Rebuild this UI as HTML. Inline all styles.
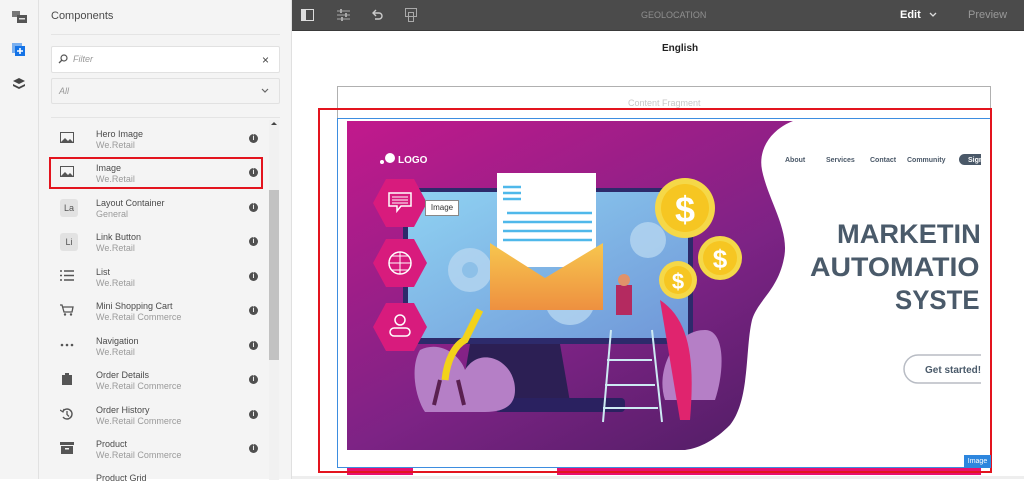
<!DOCTYPE html>
<html><head><meta charset="utf-8"><style>
*{margin:0;padding:0;box-sizing:border-box}
body{width:1024px;height:479px;overflow:hidden;background:#fff;font-family:"Liberation Sans",sans-serif;position:relative}
.abs{position:absolute}
.rail{left:0;top:0;width:39px;height:479px;background:#f4f4f4;border-right:1px solid #e1e1e1}
.panel{left:39px;top:0;width:253px;height:479px;background:#f4f4f4;border-right:1px solid #e0e0e0}
.item{position:absolute;left:50px;width:214px;height:34px}
.item .t{position:absolute;left:46px;top:3px;font-size:9px;color:#4b4b4b}
.item .s{position:absolute;left:46px;top:14px;font-size:9px;color:#9a9a9a}
.item .i{position:absolute;left:199px;top:8px;width:9px;height:9px;border-radius:50%;background:#505050;color:#f4f4f4;font-size:7px;font-weight:bold;text-align:center;line-height:9px}
.item .ic{position:absolute;left:10px;top:4px;width:18px;height:18px;border-radius:3px;background:#e2e2e2;font-size:9px;color:#555;text-align:center;line-height:18px}
.item svg{position:absolute;left:10px;top:6px}
</style></head><body>
<div class="abs rail"></div>
<svg class="abs" style="left:12px;top:10px" width="16" height="14"><rect x="0" y="1" width="8" height="6" fill="#777"/><rect x="5" y="5" width="10" height="8" fill="#555"/><rect x="7" y="8" width="6" height="1.5" fill="#ddd"/></svg>
<svg class="abs" style="left:12px;top:43px" width="14" height="14"><rect x="0" y="0" width="10" height="10" fill="#2680eb" opacity=".6"/><rect x="3" y="3" width="10" height="10" fill="#1473e6"/><path d="M8 5v6M5 8h6" stroke="#fff" stroke-width="1.6"/></svg>
<svg class="abs" style="left:12px;top:77px" width="14" height="14"><path d="M7 1l6 3-6 3-6-3z" fill="#444"/><path d="M1 7l6 3 6-3v2l-6 3-6-3z" fill="#444"/></svg>
<div class="abs panel"></div>
<div class="abs" style="left:51px;top:10px;font-size:11px;color:#4b4b4b">Components</div>
<div class="abs" style="left:51px;top:34px;width:229px;height:1px;background:#e4e4e4"></div>
<div class="abs" style="left:51px;top:46px;width:229px;height:27px;background:#fff;border:1px solid #e1e1e1;border-radius:2px"></div>
<svg class="abs" style="left:58px;top:54px" width="10" height="10"><circle cx="6" cy="4" r="3" fill="none" stroke="#555" stroke-width="1.2"/><path d="M4 6L1 9" stroke="#555" stroke-width="1.3"/></svg>
<div class="abs" style="left:73px;top:54px;font-size:9px;font-style:italic;color:#999">Filter</div>
<div class="abs" style="left:262px;top:53px;font-size:12px;color:#444">×</div>
<div class="abs" style="left:51px;top:78px;width:229px;height:26px;background:#f4f4f4;border:1px solid #e1e1e1;border-radius:2px"></div>
<div class="abs" style="left:59px;top:86px;font-size:9px;font-style:italic;color:#999">All</div>
<svg class="abs" style="left:261px;top:88px" width="8" height="6"><path d="M1 1l3 3 3-3" stroke="#666" fill="none" stroke-width="1.2"/></svg>
<div class="abs" style="left:51px;top:117px;width:229px;height:1px;background:#e4e4e4"></div>
<div class="abs" style="left:269px;top:120px;width:10px;height:360px;background:#f1f1f1"></div>
<div class="abs" style="left:269px;top:190px;width:10px;height:170px;background:#c2c2c2"></div>
<svg class="abs" style="left:271px;top:121px" width="6" height="5"><path d="M0 4l3-3 3 3z" fill="#444"/></svg>

<div class="item" style="top:126px"><svg width="14" height="11"><rect x=".5" y=".5" width="13" height="10" fill="none" stroke="#555"/><path d="M1 10l4-4 3 3 2-2 3 3z" fill="#555"/></svg><div class="t">Hero Image</div><div class="s">We.Retail</div><div class="i">i</div></div>
<div class="item" style="top:160px"><svg width="14" height="11"><rect x=".5" y=".5" width="13" height="10" fill="none" stroke="#555"/><path d="M1 10l4-4 3 3 2-2 3 3z" fill="#555"/></svg><div class="t">Image</div><div class="s">We.Retail</div><div class="i">i</div></div>
<div class="abs" style="left:49px;top:157px;width:214px;height:32px;border:2px solid #e3141e"></div>
<div class="item" style="top:195px"><div class="ic">La</div><div class="t">Layout Container</div><div class="s">General</div><div class="i">i</div></div>
<div class="item" style="top:229px"><div class="ic">Li</div><div class="t">Link Button</div><div class="s">We.Retail</div><div class="i">i</div></div>
<div class="item" style="top:264px"><svg width="14" height="12"><path d="M0 1h2M0 5.5h2M0 10h2M4 1h10M4 5.5h10M4 10h10" stroke="#555" stroke-width="1.6"/></svg><div class="t">List</div><div class="s">We.Retail</div><div class="i">i</div></div>
<div class="item" style="top:298px"><svg width="14" height="12"><path d="M0 1h2l2 7h8l1-5H3" stroke="#555" fill="none" stroke-width="1.3"/><circle cx="5" cy="10.5" r="1.2" fill="#555"/><circle cx="11" cy="10.5" r="1.2" fill="#555"/></svg><div class="t">Mini Shopping Cart</div><div class="s">We.Retail Commerce</div><div class="i">i</div></div>
<div class="item" style="top:333px"><svg width="14" height="12"><circle cx="2" cy="6" r="1.3" fill="#555"/><circle cx="7" cy="6" r="1.3" fill="#555"/><circle cx="12" cy="6" r="1.3" fill="#555"/></svg><div class="t">Navigation</div><div class="s">We.Retail</div><div class="i">i</div></div>
<div class="item" style="top:367px"><svg width="14" height="12"><rect x="2" y="2" width="10" height="10" fill="#555"/><rect x="5" y="0" width="4" height="3" fill="#555"/></svg><div class="t">Order Details</div><div class="s">We.Retail Commerce</div><div class="i">i</div></div>
<div class="item" style="top:402px"><svg width="14" height="12"><path d="M3 3a5 5 0 1 1 0 6" stroke="#555" fill="none" stroke-width="1.4"/><path d="M7 3v3.5l2 2" stroke="#555" fill="none" stroke-width="1.3"/><path d="M0 2l3 2 1-3" stroke="#555" fill="none" stroke-width="1.2"/></svg><div class="t">Order History</div><div class="s">We.Retail Commerce</div><div class="i">i</div></div>
<div class="item" style="top:436px"><svg width="14" height="12"><rect x="0" y="0" width="14" height="3" fill="#555"/><rect x="1" y="4" width="12" height="8" fill="#555"/><rect x="5" y="6" width="4" height="1.5" fill="#f4f4f4"/></svg><div class="t">Product</div><div class="s">We.Retail Commerce</div><div class="i">i</div></div>
<div class="item" style="top:470px"><div class="t">Product Grid</div></div>

<div class="abs" style="left:292px;top:0;width:732px;height:31px;background:#4b4b4b;border-bottom:1px solid #3a3a3a"></div>
<svg class="abs" style="left:301px;top:9px" width="13" height="12"><rect x=".5" y=".5" width="12" height="11" fill="none" stroke="#ddd"/><rect x="1" y="1" width="4" height="10" fill="#ddd"/></svg>
<svg class="abs" style="left:337px;top:9px" width="13" height="12"><path d="M0 2h13M0 6h13M0 10h13" stroke="#aaa"/><rect x="3" y="0" width="2" height="4" fill="#aaa"/><rect x="8" y="4" width="2" height="4" fill="#aaa"/><rect x="4" y="8" width="2" height="4" fill="#aaa"/></svg>
<svg class="abs" style="left:371px;top:9px" width="12" height="12"><path d="M3 4h5a3 3 0 0 1 0 6H4" stroke="#ccc" fill="none" stroke-width="1.4"/><path d="M5 1L2 4l3 3" stroke="#ccc" fill="none" stroke-width="1.4"/></svg>
<svg class="abs" style="left:405px;top:8px" width="12" height="14"><rect x=".5" y=".5" width="11" height="8" fill="none" stroke="#aaa"/><rect x="3.5" y="4.5" width="5" height="9" fill="none" stroke="#aaa"/></svg>
<div class="abs" style="left:641px;top:10px;font-size:9px;color:#8f8f8f">GEOLOCATION</div>
<div class="abs" style="left:900px;top:9px;font-size:11px;font-weight:bold;color:#fff">Edit</div>
<svg class="abs" style="left:929px;top:12px" width="8" height="6"><path d="M1 1l3 3 3-3" stroke="#ddd" fill="none" stroke-width="1.3"/></svg>
<div class="abs" style="left:968px;top:9px;font-size:11px;color:#999">Preview</div>

<div class="abs" style="left:662px;top:43px;font-size:10px;font-weight:bold;color:#222">English</div>
<div class="abs" style="left:337px;top:86px;width:654px;height:390px;border:1px solid #b0b0b0;border-bottom:none"></div>
<div class="abs" style="left:628px;top:98px;font-size:9px;color:#c8c8c8">Content Fragment</div>

<svg class="abs" style="left:337px;top:118px" width="654" height="361" viewBox="337 118 654 361">
<defs>
<linearGradient id="bg" x1="0" y1="0" x2="1" y2="1"><stop offset="0" stop-color="#c2198c"/><stop offset=".5" stop-color="#7d2385"/><stop offset="1" stop-color="#3a1b55"/></linearGradient>
<linearGradient id="scr" x1="0" y1="0" x2="1" y2="1"><stop offset="0" stop-color="#8fd2f2"/><stop offset="1" stop-color="#7097d8"/></linearGradient>
<linearGradient id="env" x1="0" y1="0" x2="0" y2="1"><stop offset="0" stop-color="#f7c64e"/><stop offset="1" stop-color="#ee9040"/></linearGradient>
</defs>
<rect x="337" y="118" width="654" height="361" fill="#fff"/>
<rect x="347" y="121" width="634" height="329" fill="url(#bg)"/>
<rect x="403" y="188" width="290" height="156" fill="#2d2a6b"/>
<rect x="408" y="192" width="280" height="146" fill="url(#scr)"/>
<circle cx="470" cy="270" r="22" fill="#b5d6f0" opacity=".8"/><circle cx="470" cy="270" r="8" fill="#8dc0e8"/>
<circle cx="570" cy="300" r="25" fill="#b5d6f0" opacity=".8"/>
<circle cx="648" cy="240" r="18" fill="#b5d6f0" opacity=".8"/>
<path d="M470 344h90l10 58h-110z" fill="#2c1f54"/>
<rect x="495" y="398" width="130" height="14" rx="4" fill="#2a2160"/>
<path d="M420 350c20-10 40 5 45 20 15-25 50-10 50 20 0 15-10 22-30 22h-60c-10-15-15-45-5-62z" fill="#b57fc6"/>
<path d="M665 400c-10-30 10-70 40-70 20 0 20 40 10 70z" fill="#b57fc6"/>
<path d="M680 420l-20-120c30 20 35 60 30 120z" fill="#e0246e"/>
<path d="M611 330l-8 92M652 330l10 92M607 360h45M605 385h50M603 408h55" stroke="#cdeaf3" stroke-width="2"/>
<rect x="497" y="173" width="99" height="94" fill="#fff"/>
<path d="M503 187h18M503 193h18M503 199h18M507 213h85M503 222h89M503 231h89M503 240h89" stroke="#4fb8ea" stroke-width="2.5"/>
<path d="M490 243l55 35 58-35v67h-113z" fill="url(#env)"/>
<path d="M445 380c2-20 10-35 20-40l15-30" stroke="#f2d21a" stroke-width="7" fill="none"/>
<path d="M440 380l-6 25M458 380l6 25" stroke="#5a2050" stroke-width="4"/>
<rect x="616" y="285" width="16" height="30" fill="#b42a60"/>
<circle cx="624" cy="280" r="6" fill="#e0926a"/>
<g fill="#d81b7d"><path d="M373 203l13-24h28l13 24-13 24h-28z"/><path d="M373 263l13-24h28l13 24-13 24h-28z"/><path d="M373 327l13-24h28l13 24-13 24h-28z"/></g>
<path d="M389 193h22v13h-10l-4 5v-5h-8z" fill="none" stroke="#fff" stroke-width="1.5"/><path d="M392 197h16M392 200h16M392 203h16" stroke="#fff"/>
<circle cx="400" cy="263" r="11" fill="none" stroke="#fff" stroke-width="1.5"/><path d="M389 263h22M400 252v22M392 256h16M392 270h16" stroke="#fff"/>
<circle cx="400" cy="320" r="5" fill="none" stroke="#fff" stroke-width="1.5"/><rect x="390" y="328" width="20" height="8" rx="4" fill="none" stroke="#fff" stroke-width="1.5"/>
<circle cx="685" cy="208" r="30" fill="#f5d848"/><circle cx="685" cy="208" r="24" fill="#f6c622"/>
<circle cx="720" cy="258" r="22" fill="#f5d848"/><circle cx="720" cy="258" r="17" fill="#f6c622"/>
<circle cx="678" cy="280" r="19" fill="#f5d848"/><circle cx="678" cy="280" r="14" fill="#f6c622"/>
<text x="685" y="222" font-size="36" font-weight="bold" fill="#fff" text-anchor="middle" font-family="Liberation Sans">$</text>
<text x="720" y="268" font-size="26" font-weight="bold" fill="#fff" text-anchor="middle" font-family="Liberation Sans">$</text>
<text x="678" y="289" font-size="22" font-weight="bold" fill="#fff" text-anchor="middle" font-family="Liberation Sans">$</text>
<path d="M793 121C770 130 758 150 762 170C768 200 790 230 784 258C778 290 758 300 752 320C745 350 750 400 730 425C715 440 700 448 685 450L981 450L981 121Z" fill="#fff"/>
<circle cx="382" cy="162" r="2" fill="#fff"/><circle cx="390" cy="158" r="5" fill="#fff"/>
<text x="398" y="163" font-size="10" fill="#fff" font-family="Liberation Sans" font-weight="bold">LOGO</text>
<g font-family="Liberation Sans" font-weight="bold" font-size="7" fill="#4a5868"><text x="785" y="162">About</text><text x="826" y="162">Services</text><text x="870" y="162">Contact</text><text x="907" y="162">Community</text></g>
<rect x="959" y="154" width="30" height="11" rx="5.5" fill="#4a5868"/>
<text x="968" y="162" font-size="7" fill="#fff" font-family="Liberation Sans" font-weight="bold">Sign</text>
<g font-family="Liberation Sans" font-weight="bold" font-size="27" fill="#4a5a6a"><text x="837" y="243" textLength="165" lengthAdjust="spacingAndGlyphs">MARKETING</text><text x="810" y="276" textLength="190" lengthAdjust="spacingAndGlyphs">AUTOMATION</text><text x="895" y="309" textLength="106" lengthAdjust="spacingAndGlyphs">SYSTEM</text></g>
<rect x="904" y="355" width="100" height="28" rx="14" fill="#fff" stroke="#b8bcc4" stroke-width="1.5"/>
<text x="925" y="373" font-size="10" font-weight="bold" fill="#4a5a6a" font-family="Liberation Sans">Get started!</text>
<rect x="981" y="118" width="10" height="361" fill="#fff"/>
<rect x="347" y="467" width="66" height="8" fill="#e8106e"/><rect x="557" y="467" width="424" height="8" fill="#e8106e"/>
</svg>
<div class="abs" style="left:425px;top:200px;width:34px;height:16px;background:#fff;border:1px solid #888;font-size:8px;color:#333;line-height:14px;text-align:center">Image</div>
<div class="abs" style="left:337px;top:118px;width:654px;height:350px;border:1px solid #3d8de0"></div>
<div class="abs" style="left:318px;top:108px;width:674px;height:365px;border:2px solid #e3141e"></div>
<div class="abs" style="left:964px;top:455px;width:27px;height:13px;background:#2d86de;color:#fff;font-size:7px;text-align:center;line-height:13px">Image</div>
<div class="abs" style="left:292px;top:476px;width:732px;height:3px;background:#eee"></div>
</body></html>
